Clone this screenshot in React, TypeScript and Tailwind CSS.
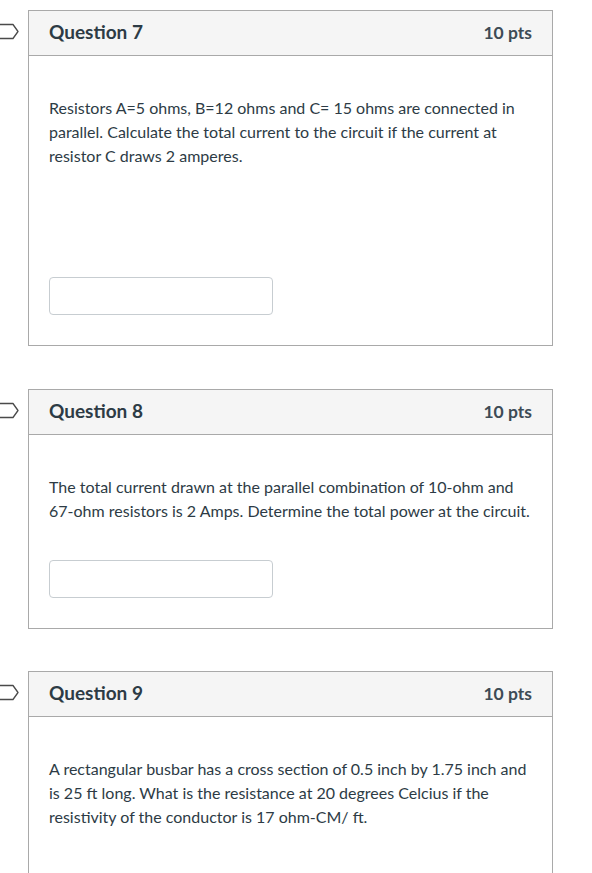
import type { ReactNode } from 'react';

interface QuestionProps {
  number: number;
  points: number;
  children: ReactNode;
  answerGap: string;
}

function Flag() {
  return (
    <svg width="20" height="17" viewBox="0 0 20 17" className="block">
      <path
        d="M-2 1.5 H13 L18 8.5 L13 15.5 H-2"
        fill="none"
        stroke="#4a4a4a"
        strokeWidth="1.3"
        strokeLinejoin="round"
      />
    </svg>
  );
}

function Question({ number, points, children, answerGap }: QuestionProps) {
  return (
    <div className="flex">
      {/* bookmark flag */}
      <div className="w-[28px] shrink-0 pt-[13px]">
        <Flag />
      </div>

      <div className="w-[525px] border border-[#a9a9a9] bg-white">
        <div className="h-[45px] flex items-center justify-between px-5 bg-[#f5f5f5] border-b border-[#a9a9a9]">
          <span className="text-[19px] font-bold text-[#2d3b45] leading-none mb-[3px]">Question {number}</span>
          <span className="text-[17.5px] font-bold text-[#3d4b56] leading-none">{points} pts</span>
        </div>

        <div className="px-5 pt-[40px] pb-[30px]">
          <p className="text-[16px] leading-6 text-[#2d3b45]">{children}</p>
          <div className={answerGap}>
            <div className="w-[224px] h-[38px] rounded-[4px] border border-[#c7cdd1] bg-white" />
          </div>
        </div>
      </div>
    </div>
  );
}

export default function App() {
  return (
    <div className="h-[873px] bg-white pt-[10px] font-['Lato','Liberation_Sans',sans-serif] overflow-hidden">
      <div className="flex flex-col gap-[43px]">
        <Question number={7} points={10} answerGap="mt-[109px]">
          Resistors A=5 ohms, B=12 ohms and C= 15 ohms are connected in parallel. Calculate the total current
          to the circuit if the current at resistor C draws 2 amperes.
        </Question>

        <Question number={8} points={10} answerGap="mt-[37px]">
          The total current drawn at the parallel combination of 10-ohm and 67-ohm resistors is 2 Amps.
          Determine the total power at the circuit.
        </Question>

        <div className="-mt-[1px]">
          <Question number={9} points={10} answerGap="mt-[61px]">
            A rectangular busbar has a cross section of 0.5 inch by 1.75 inch and is 25 ft long. What is the
            resistance at 20 degrees Celcius if the resistivity of the conductor is 17 ohm-CM/ ft.
          </Question>
        </div>
      </div>
    </div>
  );
}
